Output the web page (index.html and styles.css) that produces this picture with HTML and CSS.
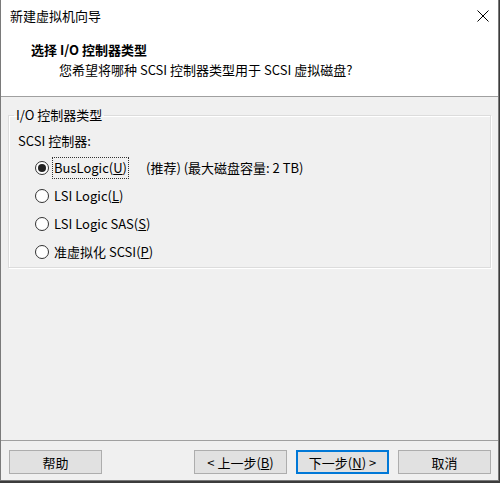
FILE: index.html
```html
<!DOCTYPE html>
<html lang="zh-CN">

<head>
    <meta charset="UTF-8">
    <title>新建虚拟机向导</title>
    <link rel="stylesheet" href="styles.css">
</head>

<body>

    <div class="window">
        <div class="titlebar">
            <span class="title">新建虚拟机向导</span>
            <button class="close" aria-label="关闭">
                <svg width="12" height="12" viewBox="0 0 12 12">
                    <path d="M0.5 0.5 L11.5 11.5 M11.5 0.5 L0.5 11.5" stroke="#000" stroke-width="1" fill="none" />
                </svg>
            </button>
        </div>

        <div class="header">
            <div class="header-title">选择 I/O 控制器类型</div>
            <div class="header-sub">您希望将哪种 SCSI 控制器类型用于 SCSI 虚拟磁盘?</div>
        </div>

        <div class="content">
            <fieldset class="group">
                <legend>I/O 控制器类型</legend>
                <div class="group-label">SCSI 控制器:</div>
                <div class="radios">
                    <div class="radio-row">
                        <span class="radio checked"></span>
                        <span class="radio-text focused">BusLogic(<u>U</u>)</span>
                        <span class="note">(推荐) (最大磁盘容量: 2 TB)</span>
                    </div>
                    <div class="radio-row">
                        <span class="radio"></span>
                        <span class="radio-text">LSI Logic(<u>L</u>)</span>
                    </div>
                    <div class="radio-row">
                        <span class="radio"></span>
                        <span class="radio-text">LSI Logic SAS(<u>S</u>)</span>
                    </div>
                    <div class="radio-row">
                        <span class="radio"></span>
                        <span class="radio-text">准虚拟化 SCSI(<u>P</u>)</span>
                    </div>
                </div>
            </fieldset>
        </div>

        <div class="footer">
            <button class="btn">帮助</button>
            <div class="spacer"></div>
            <button class="btn">&lt; 上一步(<u>B</u>)</button>
            <button class="btn default">下一步(<u>N</u>) &gt;</button>
            <button class="btn">取消</button>
        </div>
    </div>

</body>

</html>
```

FILE: styles.css
```css
body {
    margin: 0;
    background: #3c3c3c;
    font-family: "Noto Sans CJK SC", sans-serif;
    font-size: 13px;
    color: #000;
}

.window {
    width: 499px;
    height: 481px;
    box-sizing: border-box;
    border: 1px solid #7a7a7a;
    border-top: none;
    background: #f0f0f0;
    display: flex;
    flex-direction: column;
}

.titlebar {
    height: 32px;
    background: #fff;
    display: flex;
    align-items: center;
    padding: 0 9px 0 9px;
}

.title {
    flex: 1;
    line-height: 16px;
}

.close {
    border: none;
    background: none;
    padding: 0;
    width: 12px;
    height: 12px;
    display: flex;
}

.header {
    background: #fff;
    border-bottom: 1px solid #a0a0a0;
    padding: 10px 0 0 30px;
    box-sizing: border-box;
    height: 65px;
}

.header-title {
    font-weight: bold;
    line-height: 16px;
}

.header-sub {
    line-height: 16px;
    margin-top: 4px;
    padding-left: 28px;
}

.content {
    flex: 1;
    padding: 10px 7px 0 7px;
}

.group {
    margin: 0;
    border: 1px solid #dcdcdc;
    box-shadow: inset 1px 1px 0 #fff, 1px 1px 0 #fff;
    padding: 10px 0 1px 9px;
}

.group legend {
    padding: 0 2px;
    margin-left: -4px;
    line-height: 16px;
}

.group-label {
    line-height: 16px;
}

.radios {
    margin-top: 5px;
    padding-left: 17px;
}

.radio-row {
    height: 28px;
    display: flex;
    align-items: center;
}

.radio {
    width: 14px;
    height: 14px;
    box-sizing: border-box;
    border: 1px solid #333;
    border-radius: 50%;
    background: #fff;
    margin-right: 3px;
    display: flex;
    align-items: center;
    justify-content: center;
}

.radio.checked::after {
    content: "";
    width: 8px;
    height: 8px;
    border-radius: 50%;
    background: #222;
}

.radio-text {
    line-height: 16px;
    padding: 2px 1px;
    border: 1px dotted transparent;
}

.radio-text.focused {
    border-color: #333;
}

.note {
    margin-left: 17px;
    line-height: 16px;
}

.footer {
    border-top: 1px solid #a0a0a0;
    box-sizing: border-box;
    display: flex;
    align-items: flex-start;
    gap: 9px;
    padding: 9px 7px 0 8px;
    height: 40px;
}

.spacer {
    flex: 1;
}

.btn {
    width: 93px;
    height: 24px;
    background: #e1e1e1;
    border: 1px solid #adadad;
    font-family: inherit;
    font-size: 13px;
    padding: 0;
    color: #000;
}

.btn.default {
    border-color: #0078d7;
    box-shadow: inset 0 0 0 1px #0078d7;
}
```
